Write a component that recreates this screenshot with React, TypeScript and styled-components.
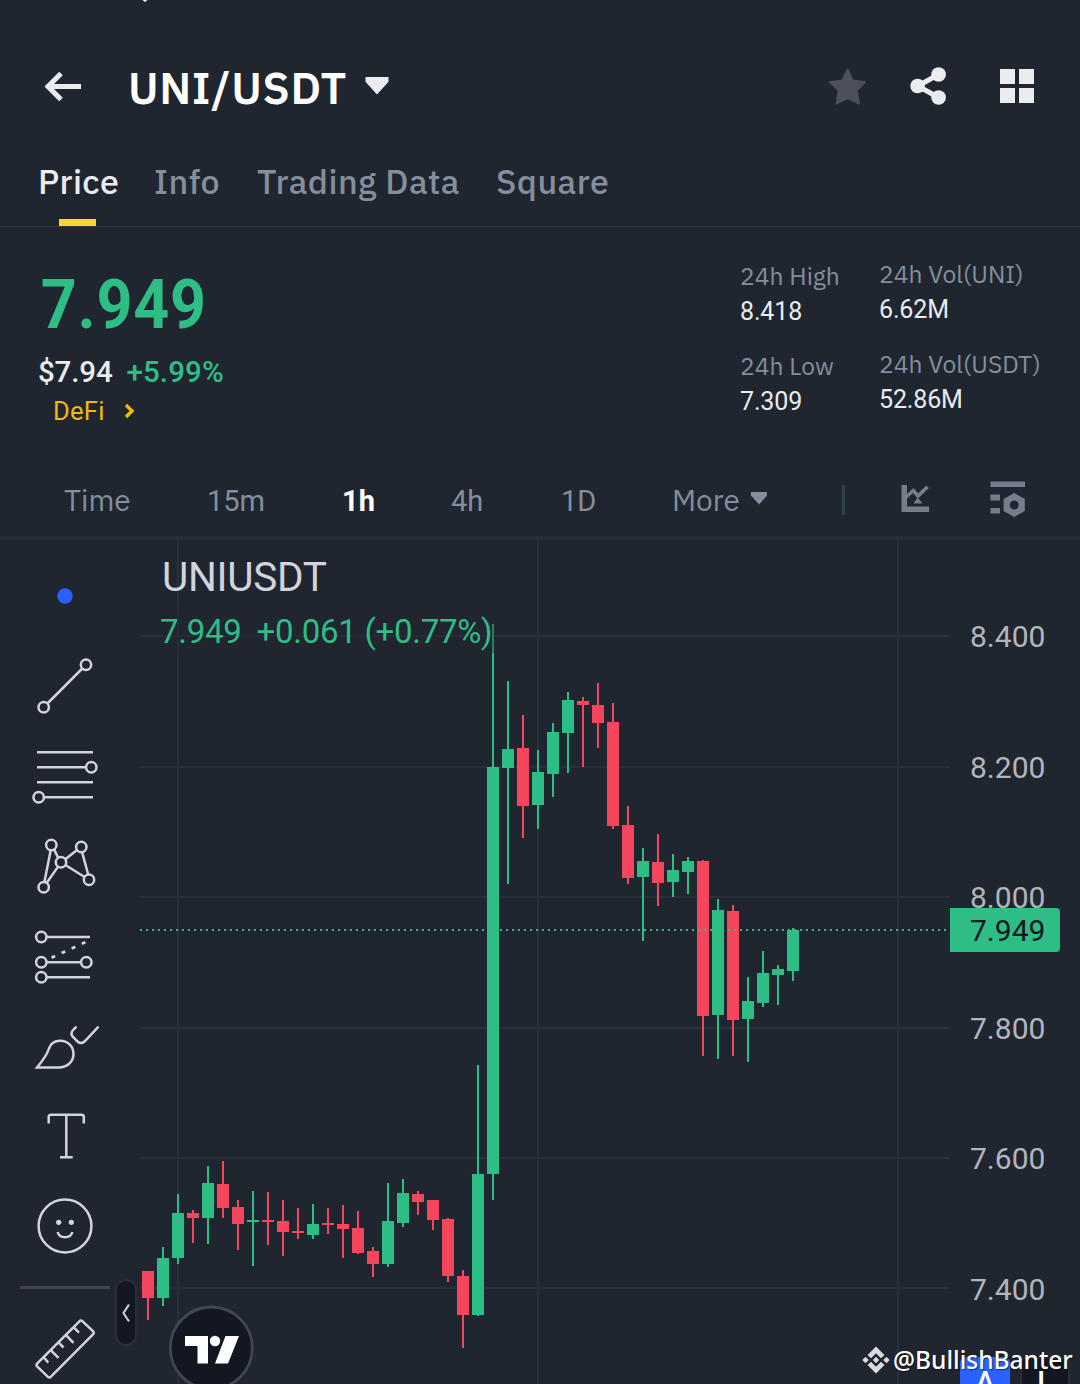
import React from "react";
import styled, { createGlobalStyle } from "styled-components";

const C = {
  bg: "#202630",
  green: "#2ebd85",
  red: "#f6465d",
  text: "#eaecef",
  muted: "#848e9c",
  line: "#2a303a",
  tool: "#d1d4dc",
  ink: "#131722",
};
const PLEX = `"IBM Plex Sans", Inter, "Noto Sans", sans-serif`;
const DIN = `Roboto, "Liberation Sans", sans-serif`;

const Global = createGlobalStyle`
  * { box-sizing: border-box; }
  body { margin: 0; background: ${C.bg}; overflow: hidden; }
  svg { display: block; }
`;

const Screen = styled.div`
  position: relative;
  width: 1080px;
  height: 1384px;
  overflow: hidden;
  display: flex;
  flex-direction: column;
  background: ${C.bg};
  color: ${C.text};
  font-family: ${PLEX};
  font-feature-settings: "cv08";
  white-space: nowrap;
`;
const TopMark = styled.svg`
  position: absolute;
  left: 141px;
  top: 0;
`;

const Header = styled.header`
  display: flex;
  align-items: center;
  height: 110px;
  margin-top: 31px;
  padding: 0 45px 0 44px;
`;
const Pair = styled.h1`
  margin: 0 17px 0 46px;
  width: 220px;
  font-size: 44.5px;
  line-height: 54px;
  font-weight: 600;
  letter-spacing: 0.6px;
  color: #fff;
  padding-top: 2px;
`;
const HeaderActions = styled.div`
  display: flex;
  align-items: center;
  gap: 43px;
  margin-left: auto;
`;

const Tabs = styled.nav`
  display: flex;
  height: 86px;
  padding-left: 38px;
  gap: 36px;
  border-bottom: 1px solid #2e3d45;
`;
const Tab = styled.div<{ $active?: boolean; $w: number }>`
  position: relative;
  width: ${(p) => p.$w}px;
  padding-top: 19px;
  font-size: 34px;
  line-height: 42px;
  font-weight: 500;
  letter-spacing: 0.45px;
  color: ${(p) => (p.$active ? C.text : C.muted)};
  &::after {
    content: "";
    display: ${(p) => (p.$active ? "block" : "none")};
    position: absolute;
    left: 21px;
    bottom: 0;
    width: 37px;
    height: 7.4px;
    background: #fcd535;
  }
`;

const Summary = styled.section`
  display: flex;
  justify-content: space-between;
  height: 239px;
  padding: 31px 39px 0 38px;
  font-family: ${DIN};
`;
const LastPrice = styled.div`
  padding: 3px 0 2px 3px;
  font-size: 69px;
  line-height: 87px;
  font-weight: 700;
  letter-spacing: 0.8px;
  color: ${C.green};
  transform: scaleX(0.91);
  transform-origin: left;
`;
const FiatRow = styled.div`
  display: flex;
  gap: 14px;
  font-size: 29.5px;
  line-height: 44px;
  font-weight: 500;
  letter-spacing: -0.15px;
`;
const Change = styled.span`
  letter-spacing: 0.1px;
  color: ${C.green};
`;
const Tag = styled.div`
  display: flex;
  align-items: center;
  gap: 19px;
  padding-left: 15px;
  font-size: 25.5px;
  line-height: 34px;
  letter-spacing: 0.3px;
  color: #f0b90b;
`;
const Stats = styled.div`
  display: grid;
  grid-template-columns: 139px 162px;
`;
const StatColumn = styled.div<{ $top: number }>`
  display: flex;
  flex-direction: column;
  gap: 20px;
  margin-top: ${(p) => p.$top}px;
`;
const Stat = styled.div`
  height: 70px;
`;
const StatLabel = styled.div`
  font-family: ${PLEX};
  font-size: 24.6px;
  line-height: 35px;
  color: ${C.muted};
`;
const StatValue = styled.div`
  font-size: 25px;
  line-height: 36px;
  letter-spacing: -0.15px;
  color: ${C.text};
`;

const Intervals = styled.div`
  display: flex;
  align-items: center;
  height: 74px;
  padding: 0 0 3px 64px;
  border-bottom: 4px solid #272c37;
`;
const Interval = styled.div<{ $w: number; $active?: boolean; $digits?: boolean }>`
  display: flex;
  align-items: center;
  gap: 11px;
  width: ${(p) => p.$w}px;
  padding-top: ${(p) => (p.$digits ? 2 : 0)}px;
  font-family: ${(p) => (p.$digits ? DIN : PLEX)};
  font-size: ${(p) => (p.$digits ? 29 : 29.7)}px;
  line-height: 40px;
  font-weight: ${(p) => (p.$active ? 700 : 400)};
  color: ${(p) => (p.$active ? "#fff" : C.muted)};
`;
const Divider = styled.div`
  width: 3px;
  height: 30px;
  margin-right: 56px;
  background: #2e3f47;
`;
const IntervalIcons = styled.div`
  display: flex;
  align-items: center;
  gap: 60px;
  margin-bottom: 1px;
`;

const ChartArea = styled.main`
  position: relative;
  flex: 1;
  display: grid;
  grid-template-columns: 140px 810px 130px;
  min-height: 0;
  font-family: ${DIN};
`;
const Tools = styled.aside`
  display: flex;
  flex-direction: column;
  padding: 11px 0 0 20px;
`;
const ToolIcon = styled.svg`
  flex: none;
  width: 90px;
  height: 90px;
  fill: none;
  stroke: ${C.tool};
  stroke-width: 2.5;
`;
const ToolRule = styled.div`
  flex: none;
  width: 90px;
  height: 3px;
  margin: 15px 0;
  background: #434651;
`;
const Plot = styled.div`
  position: relative;
`;
const PlotSvg = styled.svg`
  margin-top: -4px;
`;
const Legend = styled.div`
  position: absolute;
  left: 20px;
  top: 8px;
  color: ${C.tool};
`;
const LegendName = styled.div`
  padding-left: 2px;
  font-size: 40.5px;
  line-height: 58px;
  letter-spacing: -0.3px;
`;
const LegendValues = styled.div`
  display: flex;
  gap: 15px;
  width: 332px;
  padding-top: 1px;
  font-size: 33px;
  line-height: 50px;
  letter-spacing: -0.27px;
  color: ${C.green};
  background: ${C.bg}66;
`;
const Axis = styled.div`
  display: flex;
  flex-direction: column;
  padding: 32px 0 0 20px;
  overflow: hidden;
`;
const AxisLabel = styled.div`
  flex: none;
  height: 130.55px;
  line-height: 130.55px;
  font-size: 30px;
  color: #b2b5be;
`;
const PriceBadge = styled.div`
  position: absolute;
  left: 950px;
  top: 368px;
  width: 110px;
  height: 44px;
  padding-left: 20px;
  border-radius: 0 4px 4px 0;
  background: ${C.green};
  color: ${C.ink};
  font-size: 30px;
  line-height: 45px;
`;
const Handle = styled.div`
  position: absolute;
  left: 115px;
  top: 739px;
  width: 22px;
  height: 67px;
  display: grid;
  place-items: center;
  border: 2px solid #2a2e39;
  border-radius: 11px;
  background: ${C.ink};
`;
const Logo = styled.svg`
  position: absolute;
  left: 168px;
  top: 765px;
`;
const ScaleButton = styled.div<{ $x: number; $on?: boolean }>`
  position: absolute;
  left: ${(p) => p.$x}px;
  top: 817px;
  width: 50px;
  height: 50px;
  border-radius: 6px;
  border: 2px solid ${(p) => (p.$on ? "#2962ff" : "#2a2e39")};
  background: ${(p) => (p.$on ? "#2962ff" : C.ink)};
  color: #fff;
  font-size: 29px;
  font-weight: 500;
  line-height: 47px;
  text-align: center;
`;
const Watermark = styled.div`
  position: absolute;
  left: 862px;
  top: 803px;
  display: flex;
  align-items: center;
  gap: 3px;
  font-family: "Noto Sans", sans-serif;
  font-size: 24.5px;
  line-height: 34px;
  font-weight: 500;
  color: #fff;
  text-shadow: 1px 1px 1px #0008;
`;

// [up, bodyTop, bodyBottom, wickTop, wickBottom], one every 15px
const CANDLES: number[][] = [
  [0, 1271, 1298, 1271, 1320], [1, 1258, 1298, 1247, 1306], [1, 1213, 1258, 1194, 1264],
  [0, 1213, 1218, 1210, 1243], [1, 1183, 1218, 1166, 1244], [0, 1184, 1208, 1161, 1218],
  [0, 1207, 1224, 1200, 1250], [1, 1220, 1222, 1191, 1266], [0, 1220, 1222, 1192, 1245],
  [0, 1221, 1232, 1200, 1256], [0, 1231, 1233, 1208, 1239], [1, 1224, 1235, 1204, 1239],
  [0, 1223, 1225, 1208, 1234], [0, 1224, 1229, 1205, 1258], [0, 1228, 1253, 1211, 1254],
  [0, 1251, 1264, 1247, 1277], [1, 1221, 1264, 1183, 1267], [1, 1193, 1223, 1179, 1227],
  [0, 1194, 1202, 1191, 1215], [0, 1200, 1220, 1200, 1230], [0, 1219, 1276, 1218, 1282],
  [0, 1276, 1315, 1270, 1348], [1, 1174, 1315, 1065, 1316], [1, 767, 1174, 624, 1200],
  [1, 749, 768, 681, 884], [0, 748, 806, 715, 838], [1, 772, 805, 750, 829],
  [1, 732, 774, 723, 797], [1, 700, 733, 692, 773], [0, 701, 705, 697, 767],
  [0, 705, 723, 683, 748], [0, 722, 826, 703, 829], [0, 825, 878, 806, 884],
  [1, 861, 877, 848, 941], [0, 862, 883, 834, 906], [1, 870, 882, 854, 897],
  [1, 861, 872, 857, 894], [0, 861, 1016, 860, 1056], [1, 910, 1015, 899, 1059],
  [0, 911, 1020, 905, 1056], [1, 1001, 1019, 977, 1062], [1, 973, 1003, 951, 1007],
  [1, 969, 975, 965, 1005], [1, 930, 971, 928, 981],
];

const Chart = () => (
  <PlotSvg width="810" height="848" viewBox="140 536 810 848" shapeRendering="crispEdges">
    {[178, 538, 898].map((x) => (
      <rect key={x} x={x - 1} y="536" width="2" height="848" fill={C.line} />
    ))}
    {[636, 767, 897, 1028, 1158, 1288].map((y) => (
      <rect key={y} x="140" y={y - 1} width="810" height="2" fill={C.line} />
    ))}
    {CANDLES.map(([up, top, bottom, high, low], i) => {
      const x = 148 + i * 15;
      return (
        <g key={i} fill={up ? C.green : C.red}>
          <rect x={x - 1} y={high} width="2" height={low - high} />
          <rect x={x - 6} y={top} width="12" height={bottom - top} />
        </g>
      );
    })}
    <rect x="492" y="624" width="2" height="29" fill={C.bg} opacity="0.4" />
    <path d="M140 930H950" stroke={C.green} strokeWidth="2" strokeDasharray="2 4" />
  </PlotSvg>
);

const ToolList = () => (
  <Tools>
    <ToolIcon viewBox="0 0 90 90">
      <circle cx="45" cy="45" r="7.7" fill="#2962ff" stroke="none" />
    </ToolIcon>
    <ToolIcon viewBox="0 0 90 90">
      <circle cx="66" cy="23.8" r="5.2" />
      <circle cx="23.7" cy="66.2" r="5.2" />
      <path d="M62.3 27.5 27.4 62.5" />
    </ToolIcon>
    <ToolIcon viewBox="0 0 90 90">
      <path d="M17 21.3h56M17 36.3h49M17 51.3h56M24 66.3h49" />
      <circle cx="71.3" cy="36.3" r="5.2" />
      <circle cx="18.7" cy="66.3" r="5.2" />
    </ToolIcon>
    <ToolIcon viewBox="0 0 90 90">
      <circle cx="31.3" cy="24" r="5.2" />
      <circle cx="61.3" cy="26" r="5.2" />
      <circle cx="41" cy="41.3" r="5.2" />
      <circle cx="23.7" cy="66.3" r="5.2" />
      <circle cx="69" cy="58.7" r="5.2" />
      <path d="M30.7 29.2 24.4 61.1M34.1 28.4 38.2 36.9M38.1 45.6 26.6 62M45.3 38.3 57 29M62.1 31.2 68.2 53.5M45.5 44 64.5 56" />
    </ToolIcon>
    <ToolIcon viewBox="0 0 90 90">
      <circle cx="21.3" cy="26" r="5.2" />
      <circle cx="21.3" cy="51.3" r="5.2" />
      <circle cx="66.3" cy="51.3" r="5.2" />
      <circle cx="21.3" cy="66.3" r="5.2" />
      <path d="M26.5 26H70M26.5 51.3H61M26.5 66.3H70" />
      <path d="M31.5 46.7 66 30.9" strokeDasharray="4 7.1" strokeWidth="2.8" />
    </ToolIcon>
    <ToolIcon viewBox="0 0 90 90">
      <path d="M17 66.5H40C48 66 53.5 60 53.5 53C53.5 45 47.5 39.7 40 39.7C34 39.7 30.5 43 29 47.5C27 54 22 60.5 17 66.5Z" />
      <path d="M56.5 25.7 53 29Q50 32.5 53 36L57.5 40.5Q61 43.5 64.5 40.5L78.5 25.7" />
    </ToolIcon>
    <ToolIcon viewBox="0 0 90 90">
      <path d="M28.7 32.5V26Q28.7 23.7 31 23.7H61.5Q63.8 23.7 63.8 26V32.5M46.3 23.7V66.3M40 66.3H52.7" />
    </ToolIcon>
    <ToolIcon viewBox="0 0 90 90">
      <circle cx="45" cy="45" r="26.4" />
      <circle cx="38.7" cy="41.3" r="2.6" fill={C.tool} stroke="none" />
      <circle cx="51.3" cy="41.3" r="2.6" fill={C.tool} stroke="none" />
      <path d="M37.6 51C39.5 58 50.5 58 52.4 51" />
    </ToolIcon>
    <ToolRule />
    <ToolIcon viewBox="0 0 90 90" strokeLinejoin="round">
      <path d="M59.4 17.3Q61 15.7 62.6 17.3L73 27.2Q74.6 28.7 73 30.3L31 72.7Q29.3 74.3 27.7 72.7L17.3 62.7Q15.7 61 17.3 59.4Z" />
      <path d="M23.7 53.3 28.3 58.6M31 46.3 38.5 53.8M38.7 38.7 43.5 43.5M46.3 31.3 53.5 38.8M54 23.7 59 28.7" />
    </ToolIcon>
  </Tools>
);

export default function App() {
  return (
    <Screen>
      <Global />
      <TopMark width="8" height="3">
        <path d="M1.5 0H6.5L4 2Z" fill="#fff" />
      </TopMark>

      <Header>
        <svg width="38" height="30" viewBox="0 0 38 30" fill="none" stroke={C.text} strokeWidth="5">
          <path d="M37 15.5H3.5M17 2.5 4 15.5 17 28.5" />
        </svg>
        <Pair>UNI/USDT</Pair>
        <svg width="24" height="22" viewBox="0 0 24 22">
          <path d="M0.5 2H23.5V6.8L12 19.5 0.5 6.8Z" fill={C.text} />
        </svg>
        <HeaderActions>
          <svg width="38" height="40" viewBox="0 0 38 40">
            <path
              d="M19.6 3.5 24.5 14.5 37 16 28.5 24.5 31 37.5 19.6 32 8.5 37.5 10.8 24.5 2 16 14.5 14.5Z"
              fill="#4b505c" stroke="#4b505c" strokeWidth="2" strokeLinejoin="round"
            />
          </svg>
          <svg width="38" height="40" viewBox="0 0 38 40" fill={C.text}>
            <path d="M29.5 8.5 8.8 20 29.5 31.5" fill="none" stroke={C.text} strokeWidth="5" />
            <circle cx="8.6" cy="20" r="7.3" />
            <circle cx="29.6" cy="8.5" r="7.3" />
            <circle cx="29.6" cy="31.5" r="7.3" />
          </svg>
          <svg width="45" height="34" viewBox="0 0 45 34" fill={C.text}>
            <path d="M10 0h15v15h-15zM29 0h15v15h-15zM10 19h15v15h-15zM29 19h15v15h-15z" />
          </svg>
        </HeaderActions>
      </Header>

      <Tabs>
        <Tab $active $w={80}>Price</Tab>
        <Tab $w={67}>Info</Tab>
        <Tab $w={203}>Trading Data</Tab>
        <Tab $w={120}>Square</Tab>
      </Tabs>

      <Summary>
        <div>
          <LastPrice>7.949</LastPrice>
          <FiatRow>
            <span>$7.94</span>
            <Change>+5.99%</Change>
          </FiatRow>
          <Tag>
            DeFi
            <svg width="12" height="16" viewBox="0 0 12 16" fill="none" stroke="#f0b90b" strokeWidth="3.4">
              <path d="M2 2 8 8 2 14" />
            </svg>
          </Tag>
        </div>
        <Stats>
          <StatColumn $top={1}>
            <Stat>
              <StatLabel>24h High</StatLabel>
              <StatValue>8.418</StatValue>
            </Stat>
            <Stat>
              <StatLabel>24h Low</StatLabel>
              <StatValue>7.309</StatValue>
            </Stat>
          </StatColumn>
          <StatColumn $top={-1}>
            <Stat>
              <StatLabel>24h Vol(UNI)</StatLabel>
              <StatValue>6.62M</StatValue>
            </Stat>
            <Stat>
              <StatLabel>24h Vol(USDT)</StatLabel>
              <StatValue>52.86M</StatValue>
            </Stat>
          </StatColumn>
        </Stats>
      </Summary>

      <Intervals>
        <Interval $w={143}>Time</Interval>
        <Interval $w={135} $digits>15m</Interval>
        <Interval $w={109} $digits $active>1h</Interval>
        <Interval $w={110} $digits>4h</Interval>
        <Interval $w={111} $digits>1D</Interval>
        <Interval $w={170}>
          More
          <svg width="16" height="20" viewBox="0 0 16 20">
            <path d="M0 2H16V5.5L8 14.5 0 5.5Z" fill="#848e9c" />
          </svg>
        </Interval>
        <Divider />
        <IntervalIcons>
          <svg width="29" height="30" viewBox="0 0 29 30" fill="#767e8c">
            <path d="M0.5 1H6V22.5H28V28H0.5Z" />
            <path d="M4 14 12.3 6.5 17 12 26.5 2.8" fill="none" stroke="#767e8c" strokeWidth="3.6" />
            <path d="M16.5 13.5 21.5 19.5H12.5Z" />
          </svg>
          <svg width="36" height="36" viewBox="0 0 36 36" fill="#767e8c">
            <path d="M0.5 0.5h34.5v5.5H0.5zM0.5 13.5h9.5v6H0.5zM0.5 27h9.5v5.5H0.5z" />
            <path
              fillRule="evenodd"
              d="M24.2 12 34.8 18V30L24.2 36 13.6 30V18ZM24.2 19.5a4.5 4.5 0 1 0 0 9 4.5 4.5 0 0 0 0-9Z"
            />
          </svg>
        </IntervalIcons>
      </Intervals>

      <ChartArea>
        <ToolList />
        <Plot>
          <Chart />
          <Legend>
            <LegendName>UNIUSDT</LegendName>
            <LegendValues>
              <span>7.949</span>
              <span>+0.061 (+0.77%)</span>
            </LegendValues>
          </Legend>
        </Plot>
        <Axis>
          {["8.400", "8.200", "8.000", "7.800", "7.600", "7.400"].map((v) => (
            <AxisLabel key={v}>{v}</AxisLabel>
          ))}
        </Axis>
        <PriceBadge>7.949</PriceBadge>
        <Handle>
          <svg width="10" height="20" viewBox="0 0 10 20" fill="none" stroke="#c5c8d0" strokeWidth="2.2">
            <path d="M8 1.5 2.5 10 8 18.5" />
          </svg>
        </Handle>
        <Logo width="86" height="86" viewBox="0 0 86 86">
          <circle cx="43.3" cy="43" r="41" fill={C.ink} stroke="#434651" strokeWidth="2.8" />
          <path d="M17 31H40V58.5H29.5V41H17ZM57.5 31H71L60 58.5H47Z" fill="#fff" />
          <circle cx="47" cy="36" r="5.2" fill="#fff" />
        </Logo>
        <ScaleButton $x={960} $on>A</ScaleButton>
        <ScaleButton $x={1020}>L</ScaleButton>
        <Watermark>
          <svg width="28" height="28" viewBox="0 0 28 28" fill="#d9dbe0">
            <path d="M14 0.5 22.5 9 19 12.2 14 7.3 9 12.2 5.5 9ZM14 27.5 22.5 19 19 15.8 14 20.7 9 15.8 5.5 19ZM3.5 10.8 6.8 14 3.5 17.2 0.3 14ZM24.5 10.8 27.7 14 24.5 17.2 21.2 14ZM14 10.8 17.2 14 14 17.2 10.8 14Z" />
          </svg>
          <span>@BullishBanter</span>
        </Watermark>
      </ChartArea>
    </Screen>
  );
}
